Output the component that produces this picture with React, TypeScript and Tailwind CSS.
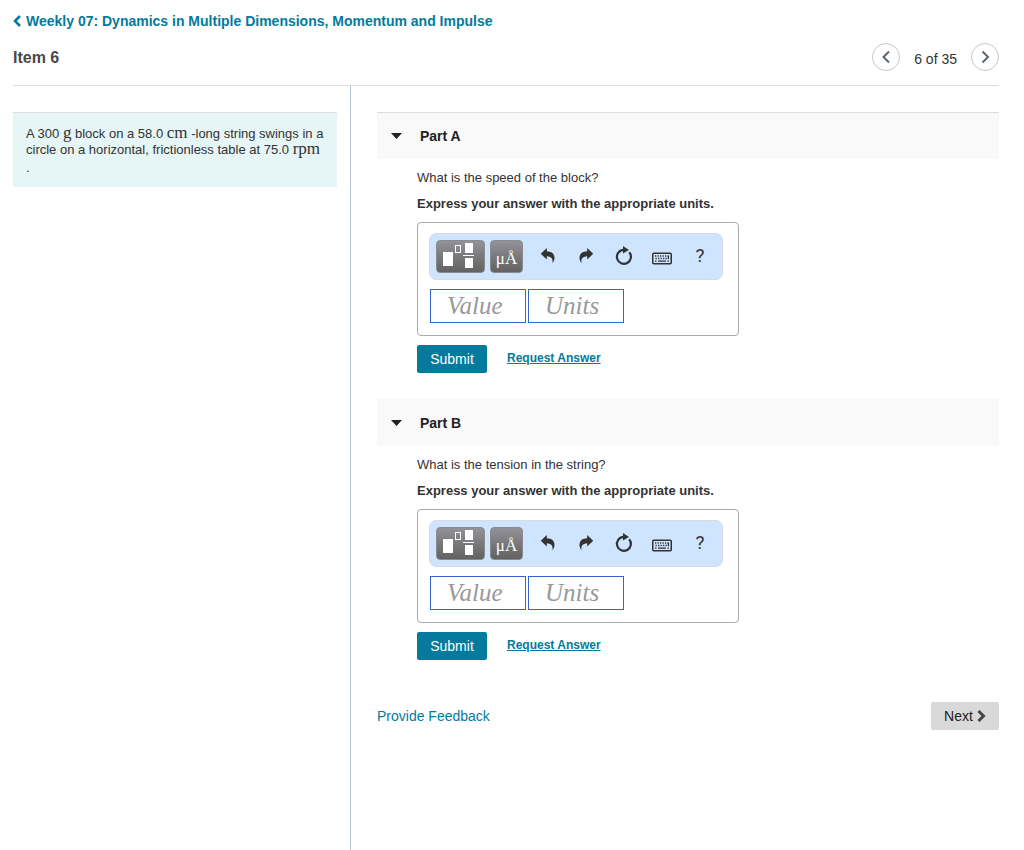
import { useState } from "react";

const parts = [
  { id: "a", title: "Part A", question: "What is the speed of the block?" },
  { id: "b", title: "Part B", question: "What is the tension in the string?" },
];

function TemplatesIcon() {
  return (
    <svg width="37" height="29" viewBox="0 0 37 29" fill="#fff">
      <rect x="1" y="10" width="10" height="14" />
      <rect x="13.5" y="3.5" width="5" height="7" fill="none" stroke="#fff" />
      <rect x="23" y="1" width="8" height="10" />
      <rect x="21" y="13" width="11" height="1" />
      <rect x="23" y="16" width="8" height="10" />
    </svg>
  );
}

function UndoIcon() {
  return (
    <svg width="16" height="16" viewBox="0 0 16 16" fill="#333">
      <path d="M.8 5.800 6.800 0v3.200c5 .2 7.700 2.600 7.700 6.600 0 2-.7 3.800-2 5.400.6-4-.9-6.600-5.700-6.900v3.300z" />
    </svg>
  );
}

function RedoIcon() {
  return (
    <svg width="16" height="16" viewBox="0 0 16 16" fill="#333">
      <path d="M15.200 5.800 9.200 0v3.200c-5 .2-7.700 2.600-7.700 6.600 0 2 .7 3.800 2 5.400-.6-4 .9-6.600 5.700-6.900v3.300z" />
    </svg>
  );
}

function ResetIcon() {
  return (
    <svg width="18" height="20" viewBox="0 0 18 20">
      <path d="M14.200 6.300A7 7 0 1 1 8.500 3.900" fill="none" stroke="#333" strokeWidth="2.200" />
      <path d="M8 0 14 4 8 7.500z" fill="#333" />
    </svg>
  );
}

function KeyboardIcon() {
  return (
    <svg width="20" height="13" viewBox="0 0 20 13" fill="none" stroke="#333">
      <rect x="0.750" y="1.250" width="18.500" height="10.500" rx="1" strokeWidth="1.500" />
      <path d="M3 4h14" strokeWidth="1.300" strokeDasharray="1.300 1.200" />
      <path d="M3.500 6.500h13.500" strokeWidth="1.300" strokeDasharray="1.300 1.200" />
      <path d="M3 9.200h1.500M6 9.200h8M15.500 9.200H17M16.400 4v3" strokeWidth="1.300" />
    </svg>
  );
}

function Chevron({ left = false }: { left?: boolean }) {
  return (
    <svg width="9" height="14" viewBox="0 0 9 14" fill="none" stroke="#5b6770" strokeWidth="2">
      <path d={left ? "M7 1.500 1.500 7 7 12.500" : "M1.500 1.500 7 7l-5.500 5.500"} />
    </svg>
  );
}

function AnswerBox({ id }: { id: string }) {
  const tool = "flex h-8 w-[38px] items-center justify-center";
  const template =
    "flex h-[33px] items-center justify-center rounded-[4px] border border-[#8a8a8f] bg-linear-to-b from-[#929299] to-[#626262] text-white";
  const field =
    "h-[34px] w-24 border border-[#3366cc] pl-4 font-['Liberation_Serif',serif] text-[25px] italic placeholder:text-[#999] placeholder:opacity-100";

  return (
    <div className="h-[114px] w-[322px] max-w-full rounded-[4px] border border-[#aaa] px-[11px] pt-[10px]">
      <div className="flex h-[47px] w-[294px] items-center rounded-[7px] border border-[#d9dde2] bg-[#cfe5ff] pl-[6px]">
        <button aria-label="Templates" className={`${template} w-[49px]`}>
          <TemplatesIcon />
        </button>
        <button
          aria-label="Symbols"
          className={`${template} ml-[5px] mr-[6px] w-[33px] pt-1 font-['Liberation_Serif',serif] text-[17px]`}
        >
          μÅ
        </button>
        <button aria-label="Undo" className={`${tool} pb-[2px]`}><UndoIcon /></button>
        <button aria-label="Redo" className={`${tool} pb-[2px]`}><RedoIcon /></button>
        <button aria-label="Reset" className={`${tool} pb-[2px]`}><ResetIcon /></button>
        <button aria-label="Keyboard shortcuts" className={`${tool} pt-1`}><KeyboardIcon /></button>
        <button aria-label="Help" className={`${tool} font-['Roboto',sans-serif] text-[19px] text-[#333]`}>?</button>
      </div>
      <div className="mt-[9px] flex gap-[2px] pl-px">
        <input id={`value-${id}`} aria-label="Value" placeholder="Value" className={field} />
        <input id={`units-${id}`} aria-label="Units" placeholder="Units" className={field} />
      </div>
    </div>
  );
}

function Part({ part, first }: { part: (typeof parts)[number]; first: boolean }) {
  const [open, setOpen] = useState(true);

  return (
    <section className="mb-[26px]">
      <h2>
        <button
          aria-expanded={open}
          onClick={() => setOpen(!open)}
          className={`flex h-[47px] w-full items-center border-t bg-[#f9f9f9] pl-[14px] text-left text-sm font-bold text-[#222] ${
            first ? "border-[#ddd]" : "border-[#f9f9f9]"
          }`}
        >
          <svg width="12" height="6" viewBox="0 0 12 6" fill="#222">
            <path d="M0 0h11L5.500 6z" />
          </svg>
          <span className="ml-[17px]">{part.title}</span>
        </button>
      </h2>
      {open && (
        <div className="pl-10 pt-[11px]">
          <p className="leading-4">{part.question}</p>
          <p className="my-[10px] font-bold leading-4">Express your answer with the appropriate units.</p>
          <AnswerBox id={part.id} />
          <div className="mt-[9px] flex items-start">
            <button className="h-7 w-[70px] rounded-[2px] bg-[#047a9c] text-sm text-white">Submit</button>
            <a href="#" className="ml-5 mt-[5px] text-xs font-bold text-[#047a9c] underline">
              Request Answer
            </a>
          </div>
        </div>
      )}
    </section>
  );
}

export default function App() {
  const round = "flex size-7 items-center justify-center rounded-full border border-[#c7c7c7]";
  const unit = "font-['Liberation_Serif',serif] text-[17px] leading-3";

  return (
    <div className="flex min-h-screen flex-col bg-white pl-[13px] pr-[25px] font-['Liberation_Sans',Arial,sans-serif] text-[13px] text-[#333]">
      <header className="border-b border-[#ddd] pt-[11px]">
        <a href="#" className="flex items-center gap-[5px] text-sm font-bold text-[#047a9c]">
          <svg width="8" height="12" viewBox="0 0 8 12" fill="none" stroke="#047a9c" strokeWidth="2.500">
            <path d="M7 1 2 6l5 5" />
          </svg>
          Weekly 07: Dynamics in Multiple Dimensions, Momentum and Impulse
        </a>
        <div className="flex h-[54px] items-start justify-between pt-3">
          <h1 className="mt-[3px] text-base font-bold leading-6 text-[#484848]">Item 6</h1>
          <nav className="flex items-center text-sm">
            <button aria-label="Previous item" className={round}><Chevron left /></button>
            <span className="mx-[14px] pt-1">6 of 35</span>
            <button aria-label="Next item" className={round}><Chevron /></button>
          </nav>
        </div>
      </header>

      <div className="flex grow">
        <aside className="w-[338px] shrink-0 border-r border-[#b5c7d3] pr-[13px] pt-[26px]">
          <div className="h-[75px] border-t border-[#ddd] bg-[#e6f5f5] pl-[13px] pt-[13px]">
            <p className="leading-4">
              A 300 <span className={unit}>g</span> block on a 58.0 <span className={unit}>cm</span> -long string
              swings in a circle on a horizontal, frictionless table at 75.0 <span className={unit}>rpm</span>
            </p>
            <p className="mt-[2px] leading-4">.</p>
          </div>
        </aside>

        <main className="min-w-0 grow pl-[26px] pt-[26px]">
          {parts.map((part, i) => (
            <Part key={part.id} part={part} first={i === 0} />
          ))}
          <footer className="mt-[42px] flex items-center justify-between text-sm">
            <a href="#" className="text-[#047a9c]">Provide Feedback</a>
            <button className="flex h-7 w-[68px] items-center justify-center gap-1 rounded-[2px] bg-[#d9d9d9] text-[#222]">
              Next
              <svg width="9" height="12" viewBox="0 0 9 12" fill="none" stroke="#444" strokeWidth="3">
                <path d="M1.500 1 6.500 6l-5 5" />
              </svg>
            </button>
          </footer>
        </main>
      </div>
    </div>
  );
}
